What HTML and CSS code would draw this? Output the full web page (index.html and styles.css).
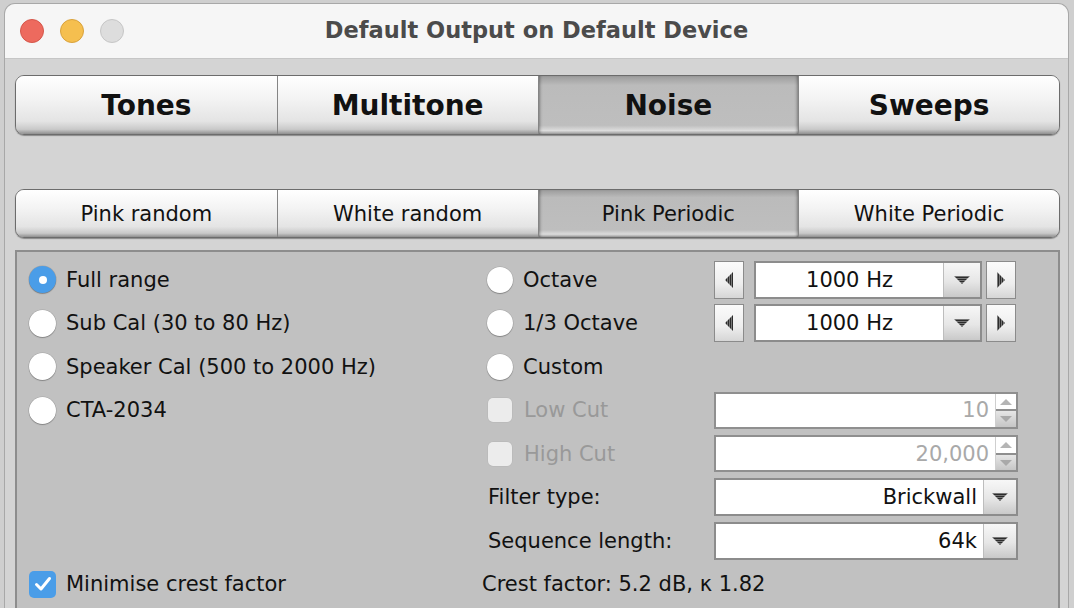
FILE: index.html
```html
<!DOCTYPE html>
<html lang="en">
<head>
    <meta charset="UTF-8">
    <meta name="viewport" content="width=device-width, initial-scale=1.0">
    <title>Default Output on Default Device</title>
    <link rel="stylesheet" href="styles.css">
</head>
<body>
    <!-- shared stripe fills for the little aqua arrows -->
    <svg class="defs" width="0" height="0">
        <defs>
            <pattern id="vstripes" width="2" height="2" patternUnits="userSpaceOnUse">
                <rect width="1" height="2" fill="#2c2c2c"/>
                <rect x="1" width="1" height="2" fill="#777"/>
            </pattern>
            <pattern id="hstripes" width="2" height="2" patternUnits="userSpaceOnUse">
                <rect width="2" height="1" fill="#2c2c2c"/>
                <rect y="1" width="2" height="1" fill="#777"/>
            </pattern>
        </defs>
    </svg>

    <div class="window">
        <div class="titlebar">
            <div class="lights">
                <span class="light red"></span>
                <span class="light yellow"></span>
                <span class="light grey"></span>
            </div>
            <div class="title">Default Output on Default Device</div>
            <div></div>
        </div>

        <div class="content">
            <div class="tabs main-tabs">
                <div class="tab">Tones</div>
                <div class="tab">Multitone</div>
                <div class="tab active">Noise</div>
                <div class="tab">Sweeps</div>
            </div>

            <div class="tabs sub-tabs">
                <div class="tab">Pink random</div>
                <div class="tab">White random</div>
                <div class="tab active">Pink Periodic</div>
                <div class="tab">White Periodic</div>
            </div>

            <div class="panel">
                <!-- left column -->
                <label class="opt left r1"><span class="radio checked"></span>Full range</label>
                <label class="opt left r2"><span class="radio"></span>Sub Cal (30 to 80 Hz)</label>
                <label class="opt left r3"><span class="radio"></span>Speaker Cal (500 to 2000 Hz)</label>
                <label class="opt left r4"><span class="radio"></span>CTA-2034</label>
                <label class="opt left r8"><span class="check checked">
                    <svg width="18" height="16" viewBox="0 0 18 16"><path d="M2.5 8.5 L7 13 L15.5 2.5" fill="none" stroke="#fff" stroke-width="3" stroke-linecap="round" stroke-linejoin="round"/></svg>
                </span>Minimise crest factor</label>

                <!-- middle column -->
                <label class="opt mid r1"><span class="radio"></span>Octave</label>
                <label class="opt mid r2"><span class="radio"></span>1/3 Octave</label>
                <label class="opt mid r3"><span class="radio"></span>Custom</label>
                <label class="opt mid r4 disabled"><span class="check"></span>Low Cut</label>
                <label class="opt mid r5 disabled"><span class="check"></span>High Cut</label>
                <div class="opt mid r6 plain">Filter type:</div>
                <div class="opt mid r7 plain">Sequence length:</div>
                <div class="opt mid r8 crest">Crest factor: 5.2 dB, &#954; 1.82</div>

                <!-- right column -->
                <div class="ctl right r1 stepper">
                    <span class="step-btn"><svg width="10" height="16"><polygon points="9,0 9,16 1,8" fill="url(#vstripes)"/></svg></span>
                    <div class="combo center"><span class="value">1000 Hz</span><span class="drop"><svg width="16" height="10"><polygon points="0,1 16,1 8,9" fill="url(#hstripes)"/></svg></span></div>
                    <span class="step-btn"><svg width="10" height="16"><polygon points="1,0 1,16 9,8" fill="url(#vstripes)"/></svg></span>
                </div>
                <div class="ctl right r2 stepper">
                    <span class="step-btn"><svg width="10" height="16"><polygon points="9,0 9,16 1,8" fill="url(#vstripes)"/></svg></span>
                    <div class="combo center"><span class="value">1000 Hz</span><span class="drop"><svg width="16" height="10"><polygon points="0,1 16,1 8,9" fill="url(#hstripes)"/></svg></span></div>
                    <span class="step-btn"><svg width="10" height="16"><polygon points="1,0 1,16 9,8" fill="url(#vstripes)"/></svg></span>
                </div>

                <div class="ctl right r4">
                    <div class="spinner"><span class="value">10</span><span class="spin"><span class="up"></span><span class="down"></span></span></div>
                </div>
                <div class="ctl right r5">
                    <div class="spinner"><span class="value">20,000</span><span class="spin"><span class="up"></span><span class="down"></span></span></div>
                </div>

                <div class="ctl right r6">
                    <div class="combo wide"><span class="value">Brickwall</span><span class="drop"><svg width="16" height="10"><polygon points="0,1 16,1 8,9" fill="url(#hstripes)"/></svg></span></div>
                </div>
                <div class="ctl right r7">
                    <div class="combo wide"><span class="value">64k</span><span class="drop"><svg width="16" height="10"><polygon points="0,1 16,1 8,9" fill="url(#hstripes)"/></svg></span></div>
                </div>
            </div>
        </div>
    </div>
</body>
</html>
```

FILE: styles.css
```css
body {
    margin: 0;
    height: 608px;
    overflow: hidden;
    background-color: #cfcfcf;
    font-family: "DejaVu Sans", sans-serif;
    color: #111;
}

.defs {
    position: absolute;
    width: 0;
    height: 0;
}

.window {
    margin: 3px 5px 0 4px;
    height: 605px;
    background-color: #d4d4d4;
    border: 1px solid #a8a8a8;
    border-bottom: none;
    border-radius: 11px 11px 0 0;
    overflow: hidden;
}

/* title bar */

.titlebar {
    height: 51px;
    padding-bottom: 3px;
    background-color: #f6f6f6;
    border-bottom: 1px solid #c6c6c6;
    display: grid;
    grid-template-columns: 1fr auto 1fr;
    align-items: center;
}

.lights {
    display: flex;
    gap: 16px;
    padding-left: 15px;
    padding-top: 2px;
}

.light {
    width: 22px;
    height: 22px;
    border-radius: 50%;
    border: 1px solid transparent;
}

.light.red {
    background-color: #ed6a5e;
    border-color: #d5564a;
}

.light.yellow {
    background-color: #f5bf4f;
    border-color: #d9a23c;
}

.light.grey {
    background-color: #dddddd;
    border-color: #c6c6c6;
}

.title {
    font-weight: 700;
    font-size: 22.5px;
    color: #4b4b4b;
}

/* tabs */

.content {
    padding: 16px 8px 0 10px;
}

.tabs {
    display: grid;
    grid-template-columns: repeat(4, 1fr);
    border: 1px solid #6c6c6c;
    border-radius: 9px;
    overflow: hidden;
    box-shadow: 0 1px 1px rgba(0, 0, 0, 0.35);
}

.main-tabs {
    height: 58px;
    font-size: 28px;
    font-weight: bold;
}

.sub-tabs {
    margin-top: 54px;
    height: 47px;
    font-size: 21px;
}

.tab {
    display: flex;
    align-items: center;
    justify-content: center;
    color: #111;
    background: linear-gradient(#ffffff, #f3f3f3 40%, #e4e4e4 78%, #c9c9c9 92%, #8f8f8f);
    border-left: 1px solid #858585;
}

.tab:first-child {
    border-left: none;
}

.tab.active {
    background: linear-gradient(#9c9c9c, #bbbbbb 16%, #bebebe 85%, #dcdcdc 94%, #9a9a9a);
    box-shadow: inset 3px 0 3px -2px rgba(0, 0, 0, 0.35), inset -3px 0 3px -2px rgba(0, 0, 0, 0.35);
}

/* noise settings panel */

.panel {
    margin-top: 12px;
    height: 400px;
    background-color: #c1c1c1;
    border: 2px solid #8d8d8d;
    padding: 6px 0 0 12px;
    display: grid;
    grid-template-columns: 458px 227px 304px;
    grid-template-rows: repeat(8, 43.5px);
    font-size: 21px;
}

.left { grid-column: 1; }
.mid { grid-column: 2; }
.right { grid-column: 3; }

.r1 { grid-row: 1; }
.r2 { grid-row: 2; }
.r3 { grid-row: 3; }
.r4 { grid-row: 4; }
.r5 { grid-row: 5; }
.r6 { grid-row: 6; }
.r7 { grid-row: 7; }
.r8 { grid-row: 8; }

.opt {
    display: flex;
    align-items: center;
    gap: 10px;
    white-space: nowrap;
}

.plain {
    padding-left: 1px;
}

.crest {
    margin-left: -5px;
}

.radio {
    width: 26px;
    height: 26px;
    border-radius: 50%;
    background-color: #fff;
    box-shadow: 0 0 0 0.5px rgba(0, 0, 0, 0.15), 0 1px 1px rgba(0, 0, 0, 0.25);
    display: flex;
    align-items: center;
    justify-content: center;
}

.left .radio {
    width: 27px;
    height: 27px;
}

.radio.checked {
    background-color: #4a9de8;
}

.radio.checked::after {
    content: "";
    width: 8px;
    height: 8px;
    border-radius: 50%;
    background-color: #fff;
}

.check {
    width: 27px;
    height: 27px;
    border-radius: 5px;
    background-color: #4a9de8;
    display: flex;
    align-items: center;
    justify-content: center;
}

.disabled {
    color: #999;
    gap: 12px;
}

.disabled .check {
    width: 24px;
    height: 24px;
    margin-left: 1px;
    background-color: #ececec;
    box-shadow: 0 0 0 0.5px rgba(0, 0, 0, 0.06);
}

/* right column controls */

.ctl {
    display: flex;
    align-items: center;
}

.step-btn {
    width: 28px;
    height: 36px;
    border: 1px solid #8b8b8b;
    background: linear-gradient(#fbfbfb, #eeeeee 60%, #d6d6d6);
    display: flex;
    align-items: center;
    justify-content: center;
}

.combo {
    height: 34px;
    border: 2px solid #8c8c8c;
    background-color: #fff;
    display: flex;
    align-items: stretch;
}

.stepper .combo {
    width: 224px;
    margin: 0 4px 0 10px;
}

.combo .value {
    flex: 1;
    display: flex;
    align-items: center;
    justify-content: flex-end;
    padding-right: 6px;
}

.combo.center .value {
    justify-content: center;
    padding-right: 0;
}

.combo .drop {
    width: 36px;
    border-left: 1px solid #bdbdbd;
    background: linear-gradient(#f7f7f7, #e6e6e6 55%, #c9c9c9);
    display: flex;
    align-items: center;
    justify-content: center;
}

.combo.wide {
    width: 300px;
}

.combo.wide .drop {
    width: 32px;
}

.spinner {
    width: 300px;
    height: 33px;
    border: 2px solid #8f8f8f;
    background-color: #fff;
    display: flex;
    color: #a9a9a9;
}

.spinner .value {
    flex: 1;
    display: flex;
    align-items: center;
    justify-content: flex-end;
    padding-right: 6px;
}

.spin {
    width: 20px;
    display: flex;
    flex-direction: column;
    border-left: 1px solid #cfcfcf;
}

.spin .up,
.spin .down {
    flex: 1;
    display: flex;
    align-items: center;
    justify-content: center;
}

.spin .up {
    border-bottom: 2px solid #8f8f8f;
}

.spin .down {
    background: linear-gradient(#e6e6e6, #c6c6c6);
}

.spin .up::after {
    content: "";
    border-left: 6px solid transparent;
    border-right: 6px solid transparent;
    border-bottom: 6px solid #b5b5b5;
}

.spin .down::after {
    content: "";
    border-left: 6px solid transparent;
    border-right: 6px solid transparent;
    border-top: 6px solid #a9a9a9;
}
```
